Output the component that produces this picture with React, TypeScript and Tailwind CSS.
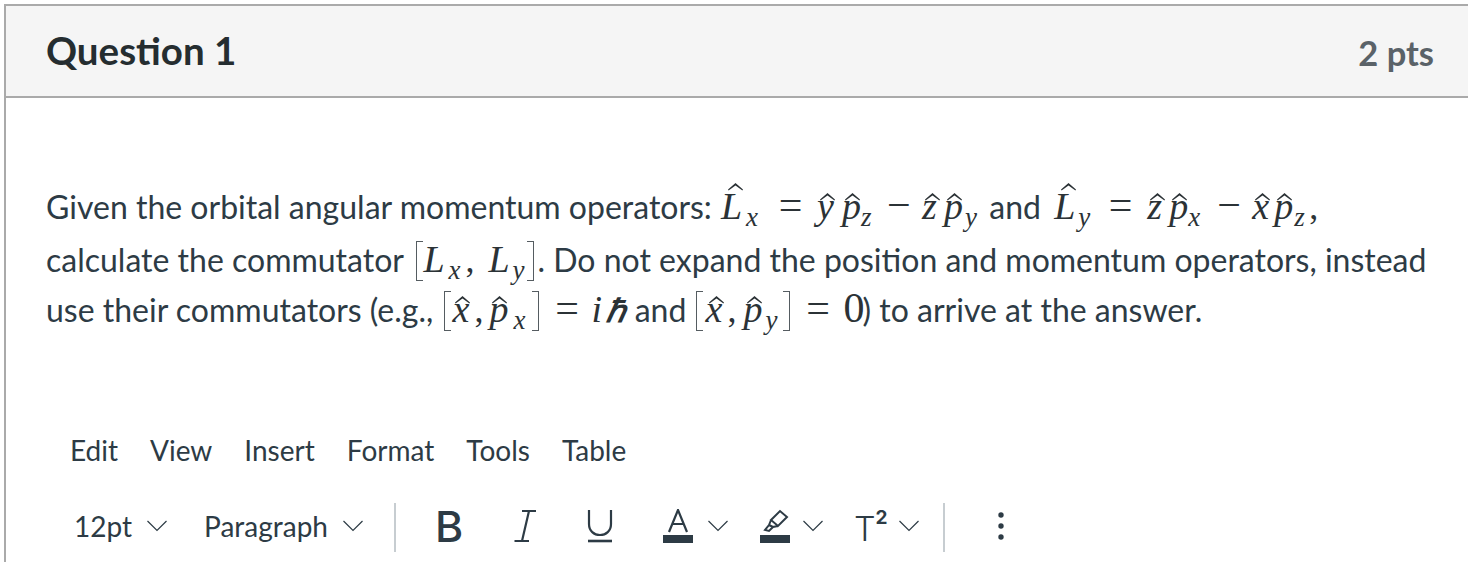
import type { ReactNode } from "react";

function Var({ children, hat, className = "" }: { children: ReactNode; hat?: boolean; className?: string }) {
  return (
    <span className={`relative block font-['Liberation_Serif',serif] italic text-[38px] text-[#2b3236] ${className}`}>
      {hat ? (
        <svg
          className={`absolute ${children === "L" ? "left-[7px] top-[2px]" : "left-[3px] top-[12px]"}`}
          width="15"
          height="8"
          viewBox="0 0 15 8"
          fill="#2b3236"
        >
          <path d="M7.5 0 L15 6.6 L14.4 7.4 L7.5 2.6 L0.6 7.4 L0 6.6 Z" />
        </svg>
      ) : null}
      {children}
    </span>
  );
}

function Sub({ children, className = "" }: { children: ReactNode; className?: string }) {
  return (
    <span className={`relative top-[7px] block font-['Liberation_Serif',serif] italic text-[27px] text-[#2b3236] ${className}`}>
      {children}
    </span>
  );
}

function Op({ children, className = "" }: { children: ReactNode; className?: string }) {
  return (
    <span className={`block text-center font-['Liberation_Serif',serif] text-[42px] text-[#2b3236] ${className}`}>
      {children}
    </span>
  );
}

function Comma({ className = "" }: { className?: string }) {
  return <span className={`block font-['Liberation_Serif',serif] text-[36px] text-[#2b3236] ${className}`}>,</span>;
}

function Bracket({ right, className = "" }: { right?: boolean; className?: string }) {
  return (
    <span
      className={`relative top-[9px] block h-[40px] w-[7px] border-y-[1.5px] border-[#555c61] ${
        right ? "border-r-[1.5px]" : "border-l-[1.5px]"
      } ${className}`}
    />
  );
}

function Line({ children, className = "" }: { children: ReactNode; className?: string }) {
  return <div className={`flex h-[50px] items-baseline whitespace-pre ${className}`}>{children}</div>;
}

function Chevron() {
  return (
    <svg width="20" height="12" viewBox="0 0 20 12" fill="none" stroke="#2d3b45" strokeWidth="1.2">
      <path d="M0.5 1 L10 10.5 L19.5 1" />
    </svg>
  );
}

function Divider({ className = "" }: { className?: string }) {
  return <div className={`mt-[3px] h-[49px] w-[2px] bg-[#c7cdd1] ${className}`} />;
}

function ItalicIcon() {
  return (
    <svg width="23" height="34" viewBox="0 0 23 34" fill="none" stroke="#2d3b45" strokeWidth="2.2">
      <path d="M8 2 H22 M15 2 L8 32 M0.5 32 H15" />
    </svg>
  );
}

function UnderlineIcon() {
  return (
    <svg width="26" height="34" viewBox="0 0 26 34" fill="none" stroke="#2d3b45" strokeWidth="2.2">
      <path d="M2 1 V15 C2 22 7 26 13 26 C19 26 24 22 24 15 V1" />
      <path d="M1 32 H25" strokeWidth="2.6" />
    </svg>
  );
}

function TextColorIcon() {
  return (
    <svg width="30" height="34" viewBox="0 0 30 34" fill="none" stroke="#2d3b45" strokeWidth="2.2">
      <path d="M6 23 L15 1 L24 23 M9 15 H21" />
      <rect x="0" y="26" width="30" height="8" fill="#2d3b45" stroke="none" />
    </svg>
  );
}

function HighlightIcon() {
  return (
    <svg width="30" height="34" viewBox="0 0 30 34" fill="none" stroke="#2d3b45" strokeWidth="2">
      <path d="M11 11 L20 2 L27 8 L18 17 Z M11 11 L9 16 L5 21 L9 22 L13 18 L18 17 M9 16 L13 18" />
      <rect x="0" y="26" width="30" height="8" fill="#2d3b45" stroke="none" />
    </svg>
  );
}

function DotsIcon() {
  return (
    <svg width="8" height="30" viewBox="0 0 8 30" fill="#2d3b45">
      <circle cx="4" cy="4" r="2.7" />
      <circle cx="4" cy="15" r="2.7" />
      <circle cx="4" cy="26" r="2.7" />
    </svg>
  );
}

export default function App() {
  return (
    <div className="h-[562px] w-[1468px] overflow-hidden bg-white pl-1 pt-1 font-['Lato',sans-serif] text-[#2d3b45]">
      <div className="h-[558px] border-l-2 border-t-2 border-[#aaaaaa]">
        <header className="flex h-[92px] items-center justify-between border-b-2 border-[#aaaaaa] bg-[#f5f5f5] pl-10 pr-[34px]">
          <h2 className="text-[38.5px] font-bold text-[#252d30]">Question 1</h2>
          <span className="relative top-[2px] text-[34.5px] font-bold text-[#5a6268]">2 pts</span>
        </header>

        <div className="pl-10 pt-[82px] text-[32px] leading-[50px]">
          <Line>
            {"Given the orbital angular momentum operators: "}
            <Var hat className="ml-[1px] w-[25px]">L</Var>
            <Sub className="w-[14px]">x</Sub>
            <Op className="ml-[18px] w-[25px]">=</Op>
            <Var hat className="ml-[14px] w-[25px]">y</Var>
            <Var hat className="w-[19px]">p</Var>
            <Sub className="w-[13px]">z</Sub>
            <Op className="ml-[13px] w-[23px]">−</Op>
            <Var hat className="ml-[12px] w-[22px]">z</Var>
            <Var hat className="w-[21px]">p</Var>
            <Sub className="w-[13px]">y</Sub>
            <span className="ml-[3px]"> and </span>
            <Var hat className="ml-[5px] w-[24px]">L</Var>
            <Sub className="w-[14px]">y</Sub>
            <Op className="ml-[16px] w-[25px]">=</Op>
            <Var hat className="ml-[14px] w-[22px]">z</Var>
            <Var hat className="w-[19px]">p</Var>
            <Sub className="w-[14px]">x</Sub>
            <Op className="ml-[15px] w-[23px]">−</Op>
            <Var hat className="ml-[12px] w-[22px]">x</Var>
            <Var hat className="w-[20px]">p</Var>
            <Sub className="w-[12px]">z</Sub>
            <Comma className="ml-[3px]" />
          </Line>
          <Line className="mt-[2px]">
            {"calculate the commutator "}
            <Bracket className="ml-[4px]" />
            <Var className="ml-[1px] w-[25px]">L</Var>
            <Sub className="w-[14px]">x</Sub>
            <Comma className="ml-[3px] w-[23px]" />
            <Var className="w-[24px]">L</Var>
            <Sub className="w-[14px]">y</Sub>
            <Bracket right />
            <span className="ml-[4px]">. Do not expand the position and momentum operators, instead</span>
          </Line>
          <Line>
            {"use their commutators (e.g., "}
            <Bracket className="ml-[3px]" />
            <Var hat className="ml-[1px] w-[22px]">x</Var>
            <Comma className="w-[15px]" />
            <Var hat className="w-[24px]">p</Var>
            <Sub className="w-[14px]">x</Sub>
            <Bracket right className="ml-[5px]" />
            <Op className="ml-[15px] w-[25px]">=</Op>
            <Var className="ml-[12px] w-[15px]">i</Var>
            <Var className="w-[20px] font-bold !text-[32px]">ℏ</Var>
            {" and "}
            <Bracket className="ml-[1px]" />
            <Var hat className="ml-[3px] w-[22px]">x</Var>
            <Comma className="w-[16px]" />
            <Var hat className="w-[22px]">p</Var>
            <Sub className="w-[14px]">y</Sub>
            <Bracket right className="ml-[3px]" />
            <Op className="ml-[16px] w-[25px]">=</Op>
            <Op className="ml-[13px] w-[17px] text-[33px]">0</Op>
            <span className="ml-[2px]">) to arrive at the answer.</span>
          </Line>
        </div>

        <nav className="mt-[98px] flex items-center pl-[64px] text-[28px] leading-[40px]">
          <span>Edit</span>
          <span className="ml-[32px]">View</span>
          <span className="ml-[32px]">Insert</span>
          <span className="ml-[32px]">Format</span>
          <span className="ml-[32px]">Tools</span>
          <span className="ml-[32px]">Table</span>
        </nav>

        <div className="mt-[32px] flex h-[48px] items-center pl-[68px] text-[28px]">
          <span>12pt</span>
          <span className="ml-[15px]"><Chevron /></span>
          <span className="ml-[37px]">Paragraph</span>
          <span className="ml-[15px]"><Chevron /></span>
          <Divider className="ml-[31px]" />
          <span className="ml-[39px] w-[28px] text-center font-['Inter',sans-serif] text-[43px] font-medium leading-none">B</span>
          <span className="ml-[51px]"><ItalicIcon /></span>
          <span className="ml-[50px]"><UnderlineIcon /></span>
          <span className="ml-[50px]"><TextColorIcon /></span>
          <span className="ml-[15px]"><Chevron /></span>
          <span className="ml-[32px]"><HighlightIcon /></span>
          <span className="ml-[13px]"><Chevron /></span>
          <span className="ml-[31px] flex w-[34px] items-start font-['Inter',sans-serif]">
            <span className="relative top-[3px] text-[34px] font-light leading-none">T</span>
            <span className="relative top-[-1px] text-[19px] font-bold leading-none">2</span>
          </span>
          <span className="ml-[11px]"><Chevron /></span>
          <Divider className="ml-[24px]" />
          <span className="ml-[52px]"><DotsIcon /></span>
        </div>
      </div>
    </div>
  );
}
